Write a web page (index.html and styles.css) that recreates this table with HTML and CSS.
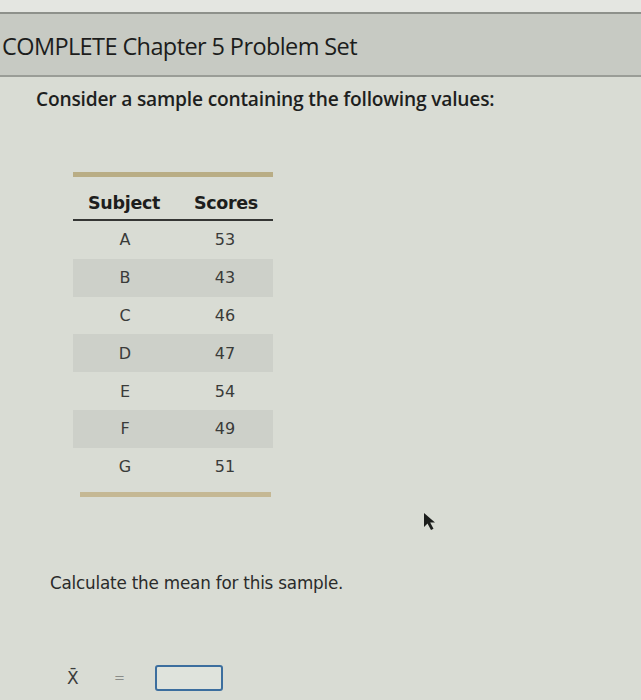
FILE: index.html
```html
<!DOCTYPE html>
<html>
<head>
<meta charset="utf-8">
<link rel="stylesheet" href="styles.css">
</head>
<body>
<div class="topstrip"></div>
<header class="header"><h1 class="title">COMPLETE Chapter 5 Problem Set</h1></header>
<main class="content">
  <p class="intro">Consider a sample containing the following values:</p>
  <div class="tablewrap">
    <div class="bar"></div>
    <table class="data">
      <thead><tr><th>Subject</th><th>Scores</th></tr></thead>
      <tbody>
        <tr><td>A</td><td>53</td></tr>
        <tr class="alt"><td>B</td><td>43</td></tr>
        <tr><td>C</td><td>46</td></tr>
        <tr class="alt"><td>D</td><td>47</td></tr>
        <tr><td>E</td><td>54</td></tr>
        <tr class="alt"><td>F</td><td>49</td></tr>
        <tr><td>G</td><td>51</td></tr>
      </tbody>
    </table>
    <div class="bar bottom"></div>
  </div>
  <p class="question">Calculate the mean for this sample.</p>
  <div class="answer">
    <span class="xbar">X&#772;</span>
    <span class="eq">=</span>
    <span class="box"></span>
  </div>
</main>
<svg class="cursor" width="14" height="20" viewBox="0 0 14 20"><path d="M1 1 L1 15 L4.5 11.5 L8 18 L10.5 16.8 L7.2 10.5 L12 10.5 Z" fill="#1c1e1c"/></svg>
</body>
</html>
```
FILE: styles.css
```css
html, body { margin: 0; padding: 0; }
body {
  width: 641px;
  height: 700px;
  overflow: hidden;
  background: #d9dcd4;
  font-family: "Open Sans", "DejaVu Sans", sans-serif;
  color: #1e201e;
  position: relative;
}
.topstrip {
  height: 12px;
  background: #e4e6e1;
  border-bottom: 2px solid #8e918b;
}
.header {
  height: 61px;
  background: #c7cac3;
  border-bottom: 2px solid #9a9d97;
  display: flex;
  align-items: center;
}
.title {
  margin: 0 0 0 2px;
  font-family: "Open Sans", sans-serif;
  font-weight: 400;
  font-size: 23.5px;
  letter-spacing: -0.6px;
  color: #1c1d1c;
  padding-top: 3px;
}
.content { padding: 0; }
.intro {
  margin: 8px 0 0 36px;
  font-family: "Open Sans", sans-serif;
  font-weight: 600;
  font-size: 19.2px;
  letter-spacing: -0.2px;
  color: #1e1f1e;
}
.tablewrap {
  margin: 60px 0 0 73px;
  width: 200px;
}
.bar {
  height: 5px;
  background: #b9ad85;
}
.bar.bottom { margin: 6px 2px 0 7px; background: #c5b894; }
.data {
  width: 200px;
  border-collapse: collapse;
  margin-top: 9px;
  font-family: "DejaVu Sans", sans-serif;
}
.data th {
  font-family: "DejaVu Sans", sans-serif;
  font-weight: 700;
  font-size: 17.5px;
  letter-spacing: -0.3px;
  color: #1d1e1d;
  height: 33px;
  border-bottom: 2px solid #353634;
  padding: 0;
}
.data th:first-child { text-align: left; padding-left: 15px; }
.data th:last-child { text-align: right; padding-right: 15px; }
.data td {
  font-size: 16px;
  color: #3a3b39;
  height: 37.8px;
  padding: 0;
  text-align: center;
}
.data td:first-child { width: 104px; }
.data tr.alt td { background: #cdd0c9; }
.question {
  margin: 76px 0 0 50px;
  font-family: "DejaVu Sans", sans-serif;
  font-size: 16.8px;
  letter-spacing: -0.2px;
  color: #2a2b2a;
}
.answer {
  margin: 72px 0 0 67px;
  display: flex;
  align-items: center;
  height: 26px;
}
.xbar {
  font-family: "DejaVu Sans", sans-serif;
  font-size: 17px;
  color: #3c3d3b;
  width: 47px;
}
.eq {
  font-family: "DejaVu Sans", sans-serif;
  font-size: 13px;
  color: #8a8c88;
  width: 41px;
}
.box {
  display: block;
  width: 64px;
  height: 22px;
  border: 2px solid #3c6e9e;
  border-radius: 3px;
  background: #dfe3dc;
}
.cursor {
  position: absolute;
  left: 423px;
  top: 512px;
}
```
